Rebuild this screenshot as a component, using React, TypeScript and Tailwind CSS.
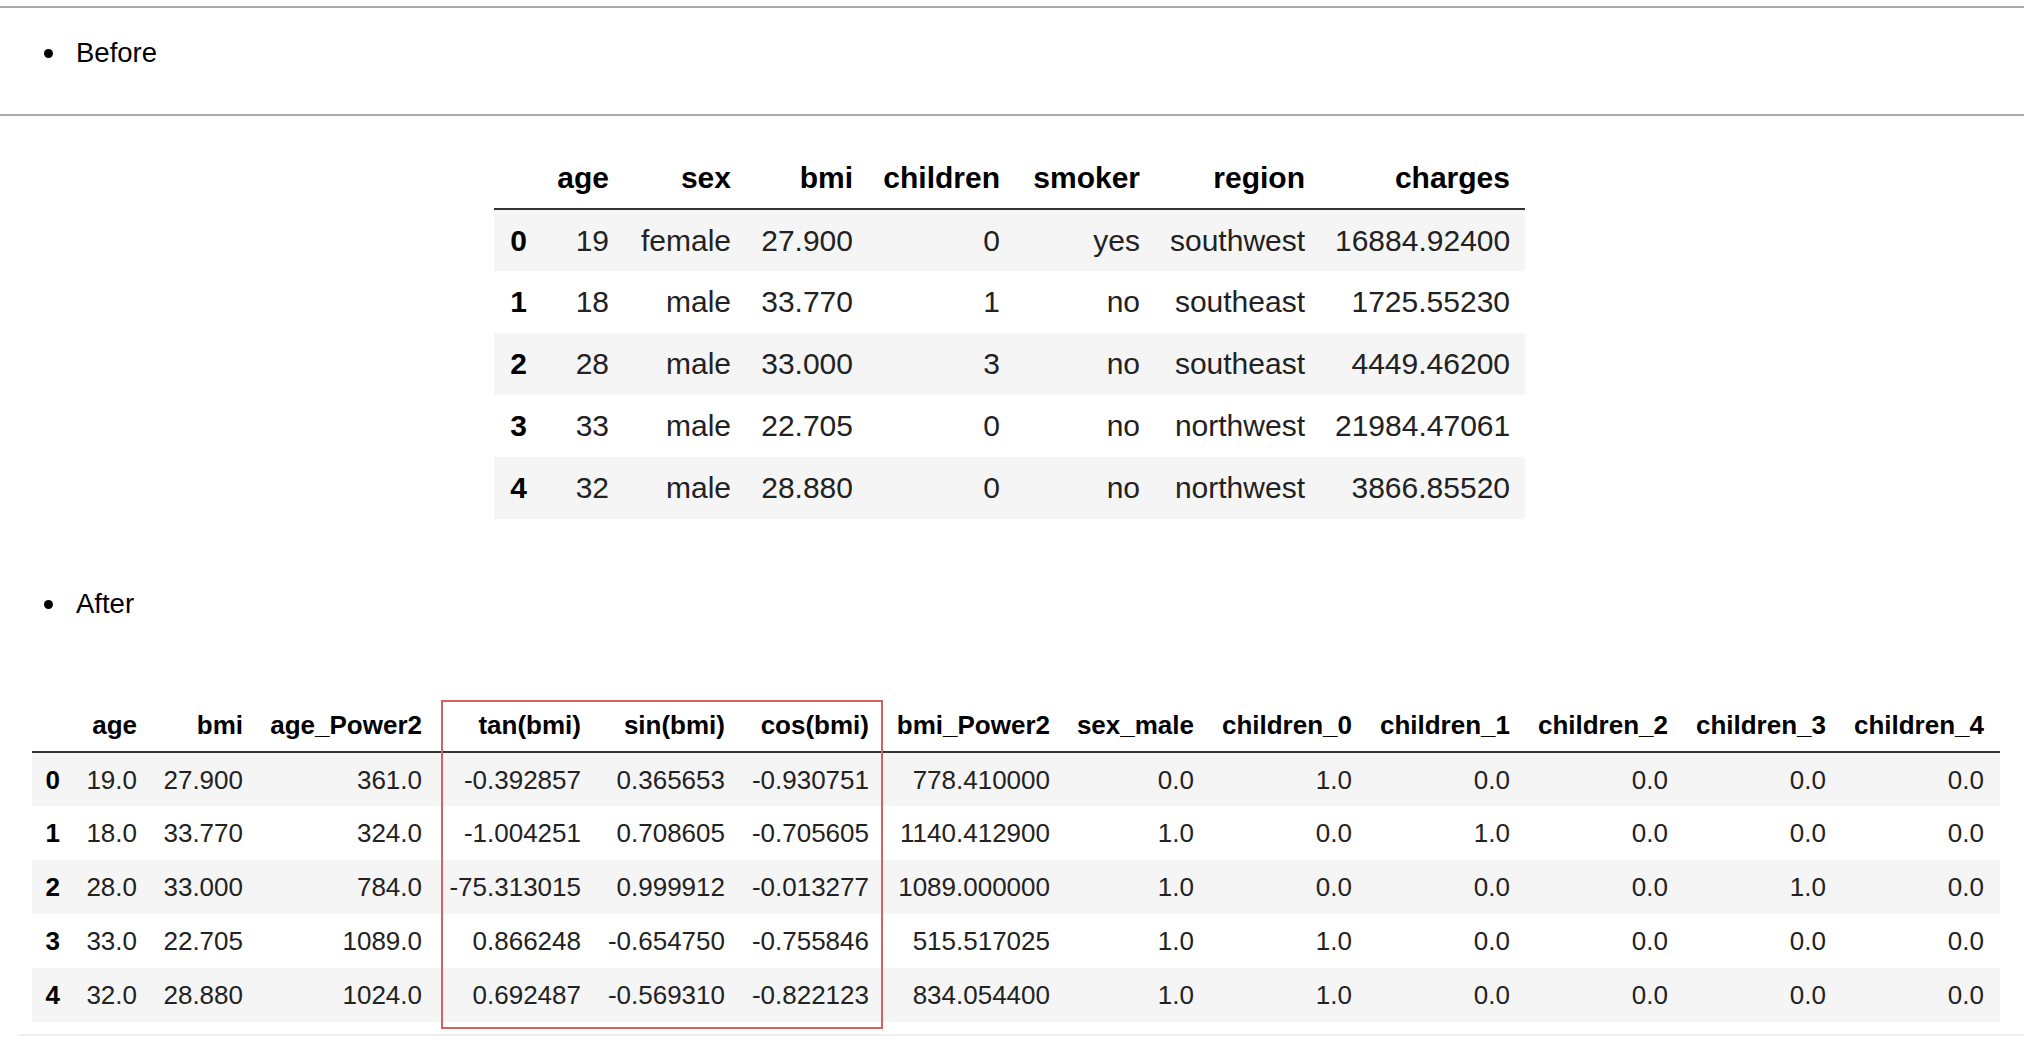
import React from "react";

const upperHead = ["", "age", "sex", "bmi", "children", "smoker", "region", "charges"];
const upperCols = ["w-[48px]", "w-[82px]", "w-[122px]", "w-[122px]", "w-[147px]", "w-[140px]", "w-[165px]", "w-[205px]"];
const upperRows = [
  ["0", "19", "female", "27.900", "0", "yes", "southwest", "16884.92400"],
  ["1", "18", "male", "33.770", "1", "no", "southeast", "1725.55230"],
  ["2", "28", "male", "33.000", "3", "no", "southeast", "4449.46200"],
  ["3", "33", "male", "22.705", "0", "no", "northwest", "21984.47061"],
  ["4", "32", "male", "28.880", "0", "no", "northwest", "3866.85520"],
];

const lowerHead = [
  "",
  "age",
  "bmi",
  "age_Power2",
  "tan(bmi)",
  "sin(bmi)",
  "cos(bmi)",
  "bmi_Power2",
  "sex_male",
  "children_0",
  "children_1",
  "children_2",
  "children_3",
  "children_4",
];
const lowerCols = [
  "w-[41px]",
  "w-[77px]",
  "w-[106px]",
  "w-[179px]",
  "w-[159px]",
  "w-[144px]",
  "w-[144px]",
  "w-[181px]",
  "w-[144px]",
  "w-[158px]",
  "w-[158px]",
  "w-[158px]",
  "w-[158px]",
  "w-[161px]",
];
const lowerRows = [
  ["0", "19.0", "27.900", "361.0", "-0.392857", "0.365653", "-0.930751", "778.410000", "0.0", "1.0", "0.0", "0.0", "0.0", "0.0"],
  ["1", "18.0", "33.770", "324.0", "-1.004251", "0.708605", "-0.705605", "1140.412900", "1.0", "0.0", "1.0", "0.0", "0.0", "0.0"],
  ["2", "28.0", "33.000", "784.0", "-75.313015", "0.999912", "-0.013277", "1089.000000", "1.0", "0.0", "0.0", "0.0", "1.0", "0.0"],
  ["3", "33.0", "22.705", "1089.0", "0.866248", "-0.654750", "-0.755846", "515.517025", "1.0", "1.0", "0.0", "0.0", "0.0", "0.0"],
  ["4", "32.0", "28.880", "1024.0", "0.692487", "-0.569310", "-0.822123", "834.054400", "1.0", "1.0", "0.0", "0.0", "0.0", "0.0"],
];

function cellPad(ci: number) {
  return ci === 13 ? "pl-[13px] pr-[16px]" : "px-[13px]";
}

function Bullet({ label }: { label: string }) {
  return (
    <ul className="list-none m-0 p-0">
      <li className="flex items-center h-[32px] text-[27.5px] leading-[32px] text-black">
        <span className="ml-[44px] w-[9px] h-[9px] rounded-full bg-black shrink-0" />
        <span className="ml-[23px]">{label}</span>
      </li>
    </ul>
  );
}

export default function App() {
  return (
    <div className="w-[2024px] h-[1040px] overflow-hidden bg-white font-['Liberation_Sans',Arial,sans-serif]">
      {/* Before section */}
      <div className="mt-[6px] border-t-2 border-b-2 border-[#ababab] h-[110px] pt-[29px]">
        <Bullet label="Before" />
      </div>

      {/* Upper table */}
      <table className="table-fixed border-collapse w-[1031px] ml-[494px] mt-[31px] text-[30px] leading-[34px]">
        <colgroup>
          {upperCols.map((c, i) => (
            <col key={i} className={c} />
          ))}
        </colgroup>
        <thead>
          <tr className="h-[62px]">
            {upperHead.map((h, i) => (
              <th key={i} className="px-[15px] py-0 text-right font-bold text-black whitespace-nowrap border-b-2 border-[#333333] align-middle">
                {h}
              </th>
            ))}
          </tr>
        </thead>
        <tbody>
          {upperRows.map((r, ri) => (
            <tr key={ri} className={ri % 2 === 0 ? "h-[62px] bg-[#f5f5f5]" : "h-[62px] bg-white"}>
              {r.map((v, ci) =>
                ci === 0 ? (
                  <th key={ci} className="px-[15px] py-0 text-right font-bold text-black whitespace-nowrap align-middle">
                    {v}
                  </th>
                ) : (
                  <td key={ci} className="px-[15px] py-0 text-right text-[#222222] whitespace-nowrap align-middle">
                    {v}
                  </td>
                )
              )}
            </tr>
          ))}
        </tbody>
      </table>

      {/* After section */}
      <div className="mt-[69px]">
        <Bullet label="After" />
      </div>

      {/* Lower table */}
      <div className="relative ml-[32px] mt-[78px] w-[1968px]">
        <table className="table-fixed border-collapse w-[1968px] text-[26px] leading-[30px]">
          <colgroup>
            {lowerCols.map((c, i) => (
              <col key={i} className={c} />
            ))}
          </colgroup>
          <thead>
            <tr className="h-[54px]">
              {lowerHead.map((h, i) => (
                <th key={i} className={`${cellPad(i)} py-0 text-right font-bold text-black whitespace-nowrap border-b-2 border-[#333333] align-middle`}>
                  {h}
                </th>
              ))}
            </tr>
          </thead>
          <tbody>
            {lowerRows.map((r, ri) => (
              <tr key={ri} className={ri % 2 === 0 ? "h-[54px] bg-[#f5f5f5]" : "h-[54px] bg-white"}>
                {r.map((v, ci) =>
                  ci === 0 ? (
                    <th key={ci} className="px-[13px] py-0 text-right font-bold text-black whitespace-nowrap align-middle">
                      {v}
                    </th>
                  ) : (
                    <td key={ci} className={`${cellPad(ci)} py-0 text-right text-[#222222] whitespace-nowrap align-middle`}>
                      {v}
                    </td>
                  )
                )}
              </tr>
            ))}
          </tbody>
        </table>
        {/* red annotation box */}
        <div className="absolute left-[409px] top-[2px] w-[442px] h-[329px] border-2 border-[#d06464] pointer-events-none" />
      </div>

      <div className="ml-[18px] mt-[12px] border-t-2 border-[#efefef]" />
    </div>
  );
}
